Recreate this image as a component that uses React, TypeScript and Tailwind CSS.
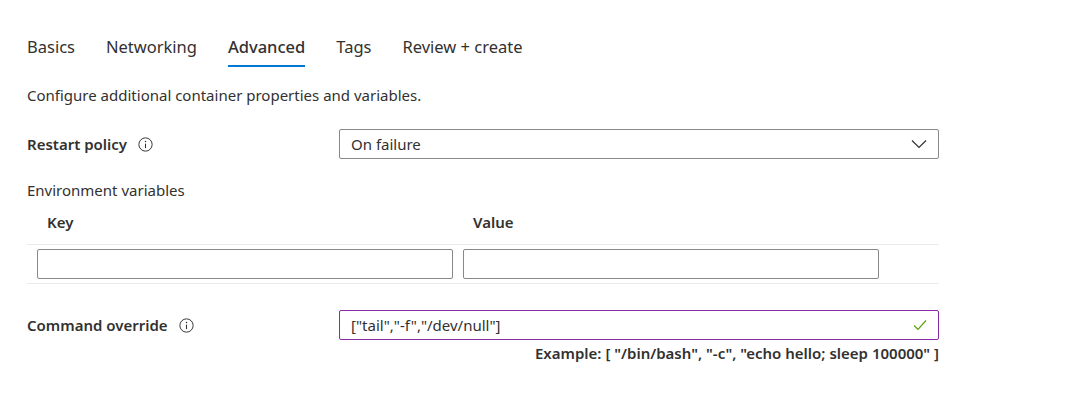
import React from "react";

const Info = () => (
  <svg width="15" height="15" viewBox="0 0 14 14" className="ml-[11px]">
    <circle cx="7" cy="7" r="6.2" fill="none" stroke="#323130" strokeWidth="0.9" />
    <circle cx="7" cy="4.3" r="0.7" fill="#323130" />
    <path d="M7 6.2v4.2" stroke="#323130" strokeWidth="1" />
  </svg>
);

export default function App() {
  const tabs = ["Basics", "Networking", "Advanced", "Tags", "Review + create"];
  return (
    <div className="w-[1082px] h-[412px] bg-white text-[#323130] text-[15px]" style={{ fontFamily: '"Segoe UI", "Noto Sans", sans-serif' }}>
      <div className="flex gap-[31px] pl-[27px] pt-[32px]">
        {tabs.map((t) => (
          <div key={t} className={`text-[16.5px] leading-[26px] pt-[2px] pb-[5px] border-b-[2px] ${t === "Advanced" ? "border-[#0078d4] font-medium" : "border-transparent"}`}>{t}</div>
        ))}
      </div>
      <div className="pl-[27px] w-[939px]">
        <div className="mt-[18px] leading-[20px]">Configure additional container properties and variables.</div>
        <div className="flex items-center mt-[24px] h-[30px]">
          <div className="w-[312px] flex items-center font-semibold">Restart policy<Info /></div>
          <div className="flex-1 h-[30px] border border-[#8a8886] rounded-[2px] flex items-center justify-between px-[11px]">
            <span>On failure</span>
            <svg width="16" height="10" viewBox="0 0 16 10"><path d="M1 1.5l7 7 7-7" fill="none" stroke="#323130" strokeWidth="1.2" /></svg>
          </div>
        </div>
        <div className="mt-[21px] leading-[20px]">Environment variables</div>
        <div className="flex mt-[12px] h-[20px] font-semibold leading-[20px]">
          <div className="pl-[20px] w-[446px]">Key</div>
          <div>Value</div>
        </div>
        <div className="mt-[12px] border-t border-[#edebe9] border-b py-[4px] flex gap-[10px] pl-[10px]">
          <div className="w-[416px] h-[30px] border border-[#8a8886] rounded-[2px]" />
          <div className="w-[416px] h-[30px] border border-[#8a8886] rounded-[2px]" />
        </div>
        <div className="flex items-center mt-[26px] h-[30px]">
          <div className="w-[312px] flex items-center font-semibold">Command override<Info /></div>
          <div className="flex-1 h-[30px] border border-[#8a2da5] rounded-[2px] flex items-center justify-between px-[11px]">
            <span>["tail","-f","/dev/null"]</span>
            <svg width="14" height="12" viewBox="0 0 14 12"><path d="M1 6.5l4 4 8-9" fill="none" stroke="#57a300" strokeWidth="1.2" /></svg>
          </div>
        </div>
        <div className="text-right font-semibold mt-[3px] leading-[20px]">Example: [ "/bin/bash", "-c", "echo hello; sleep 100000" ]</div>
      </div>
    </div>
  );
}
